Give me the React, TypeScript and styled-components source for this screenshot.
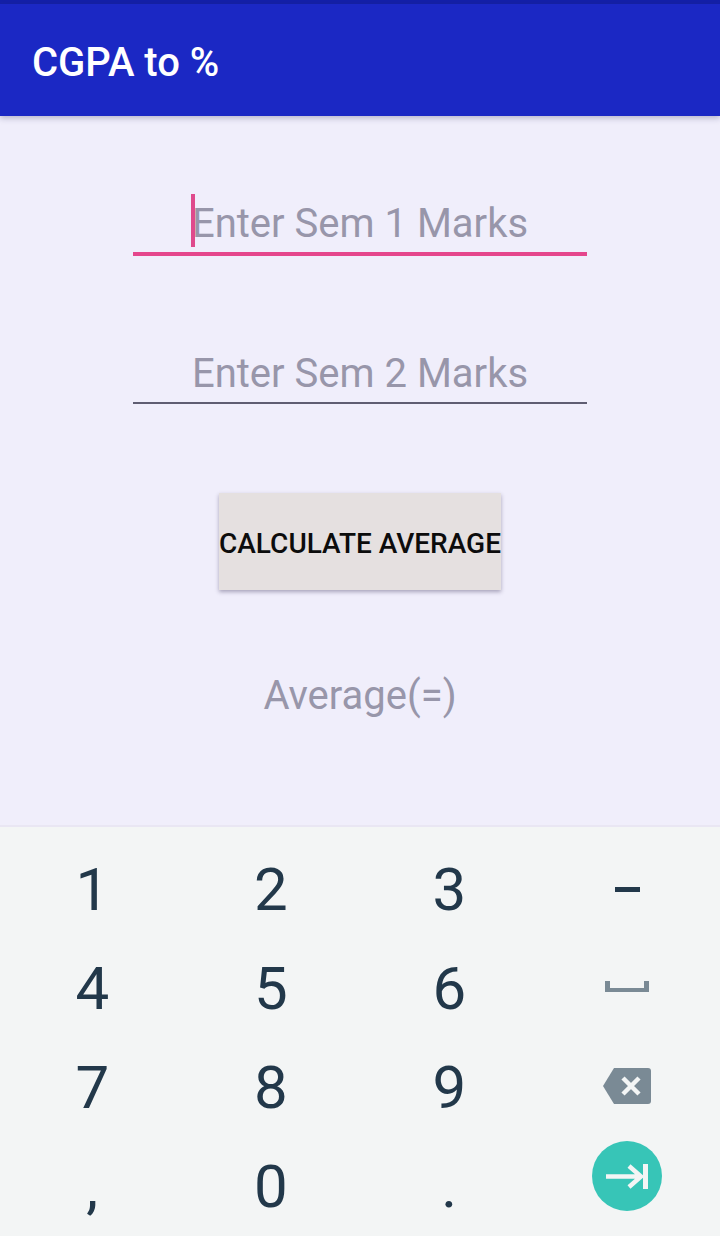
import React from "react";
import styled, { createGlobalStyle } from "styled-components";

const Global = createGlobalStyle`
  html, body { margin: 0; padding: 0; background: #f0eefb; }
  * { box-sizing: border-box; }
`;

const Page = styled.div`
  width: 720px;
  height: 1236px;
  display: flex;
  flex-direction: column;
  overflow: hidden;
  background: #f0eefb;
  font-family: Roboto, "Liberation Sans", sans-serif;
`;

const StatusBar = styled.div`
  height: 4px;
  flex: none;
  background: #1420a8;
`;

const AppBar = styled.header`
  height: 112px;
  flex: none;
  display: flex;
  align-items: center;
  padding: 4px 0 0 32px;
  background: #1b28c4;
  box-shadow: 0 2px 6px rgba(40, 40, 90, 0.3);
  position: relative;
  color: #fff;
  font-size: 40px;
  font-weight: 500;
`;

const Content = styled.main`
  height: 709px;
  flex: none;
  display: flex;
  flex-direction: column;
  align-items: center;
  padding-top: 74px;
`;

const Field = styled.div<{ $focused?: boolean }>`
  width: 454px;
  height: ${(p) => (p.$focused ? 66 : 64)}px;
  margin-bottom: ${(p) => (p.$focused ? 84 : 89)}px;
  display: flex;
  justify-content: center;
  align-items: center;
  padding-top: ${(p) => (p.$focused ? 5 : 4)}px;
  border-bottom: ${(p) => (p.$focused ? "4px solid #e5468c" : "2px solid #5f5d72")};
  font-size: 40px;
  color: #9896aa;
  position: relative;
`;

const Caret = styled.span`
  position: absolute;
  left: 58px;
  top: 4px;
  width: 4px;
  height: 53px;
  background: #df4a8c;
`;

const CalcButton = styled.button`
  width: 282px;
  height: 97px;
  flex: none;
  padding: 4px 0 0;
  border: 0;
  background: #e5e0e0;
  box-shadow: 0 2px 4px rgba(60, 50, 90, 0.4);
  font-family: inherit;
  font-size: 28px;
  font-weight: 500;
  color: #0c0c0c;
  white-space: nowrap;
`;

const Average = styled.div`
  margin-top: 82px;
  font-size: 40px;
  color: #9896aa;
`;

const Keyboard = styled.section`
  flex: 1;
  display: grid;
  grid-template-columns: repeat(3, 178.5px) 177px;
  grid-auto-rows: 99px;
  padding: 13px 0 0 3px;
  background: #f3f5f5;
  border-top: 2px solid #e9e6f3;
`;

const Key = styled.div<{ $lift?: number }>`
  display: flex;
  align-items: center;
  justify-content: center;
  padding-bottom: ${(p) => (p.$lift ?? 0) * 2}px;
  font-size: 60px;
  color: #22384a;
`;

const EnterCircle = styled.div`
  width: 70px;
  height: 70px;
  border-radius: 50%;
  display: flex;
  align-items: center;
  justify-content: center;
  background: #37c5b7;
`;

const digits = ["1", "2", "3", "−", "4", "5", "6", "space", "7", "8", "9", "back", ",", "0", ".", "enter"];

const lifts: Record<string, number> = { space: 2.5, back: 1.5, enter: 10.5 };

const renderKey = (k: string) => {
  if (k === "−")
    return (
      <svg width="25" height="5" viewBox="0 0 25 5">
        <rect width="25" height="5" fill="#22384a" />
      </svg>
    );
  if (k === "space")
    return (
      <svg width="44" height="11" viewBox="0 0 44 11">
        <path d="M0 0h5v7h34V0h5v11H0z" fill="#7a8a95" />
      </svg>
    );
  if (k === "back")
    return (
      <svg width="48" height="36" viewBox="0 0 48 36">
        <path d="M11 0h34a3 3 0 0 1 3 3v30a3 3 0 0 1-3 3H11L0 18z" fill="#7a8a95" />
        <path d="M20 10l16 16M36 10L20 26" stroke="#f3f5f5" strokeWidth="4.5" fill="none" />
      </svg>
    );
  if (k === "enter")
    return (
      <EnterCircle>
        <svg width="42" height="25" viewBox="0 0 42 25">
          <path d="M0 12.5h35M23 2l12 10.5L23 23" stroke="#f3f5f5" strokeWidth="4.5" fill="none" />
          <rect x="37" width="5" height="25" fill="#f3f5f5" />
        </svg>
      </EnterCircle>
    );
  return k;
};

export default function App() {
  return (
    <Page>
      <Global />
      <StatusBar />
      <AppBar>CGPA to %</AppBar>
      <Content>
        <Field $focused>
          <Caret />
          Enter Sem 1 Marks
        </Field>
        <Field>Enter Sem 2 Marks</Field>
        <CalcButton>CALCULATE AVERAGE</CalcButton>
        <Average>Average(=)</Average>
      </Content>
      <Keyboard>
        {digits.map((k) => (
          <Key key={k} $lift={lifts[k]}>
            {renderKey(k)}
          </Key>
        ))}
      </Keyboard>
    </Page>
  );
}
